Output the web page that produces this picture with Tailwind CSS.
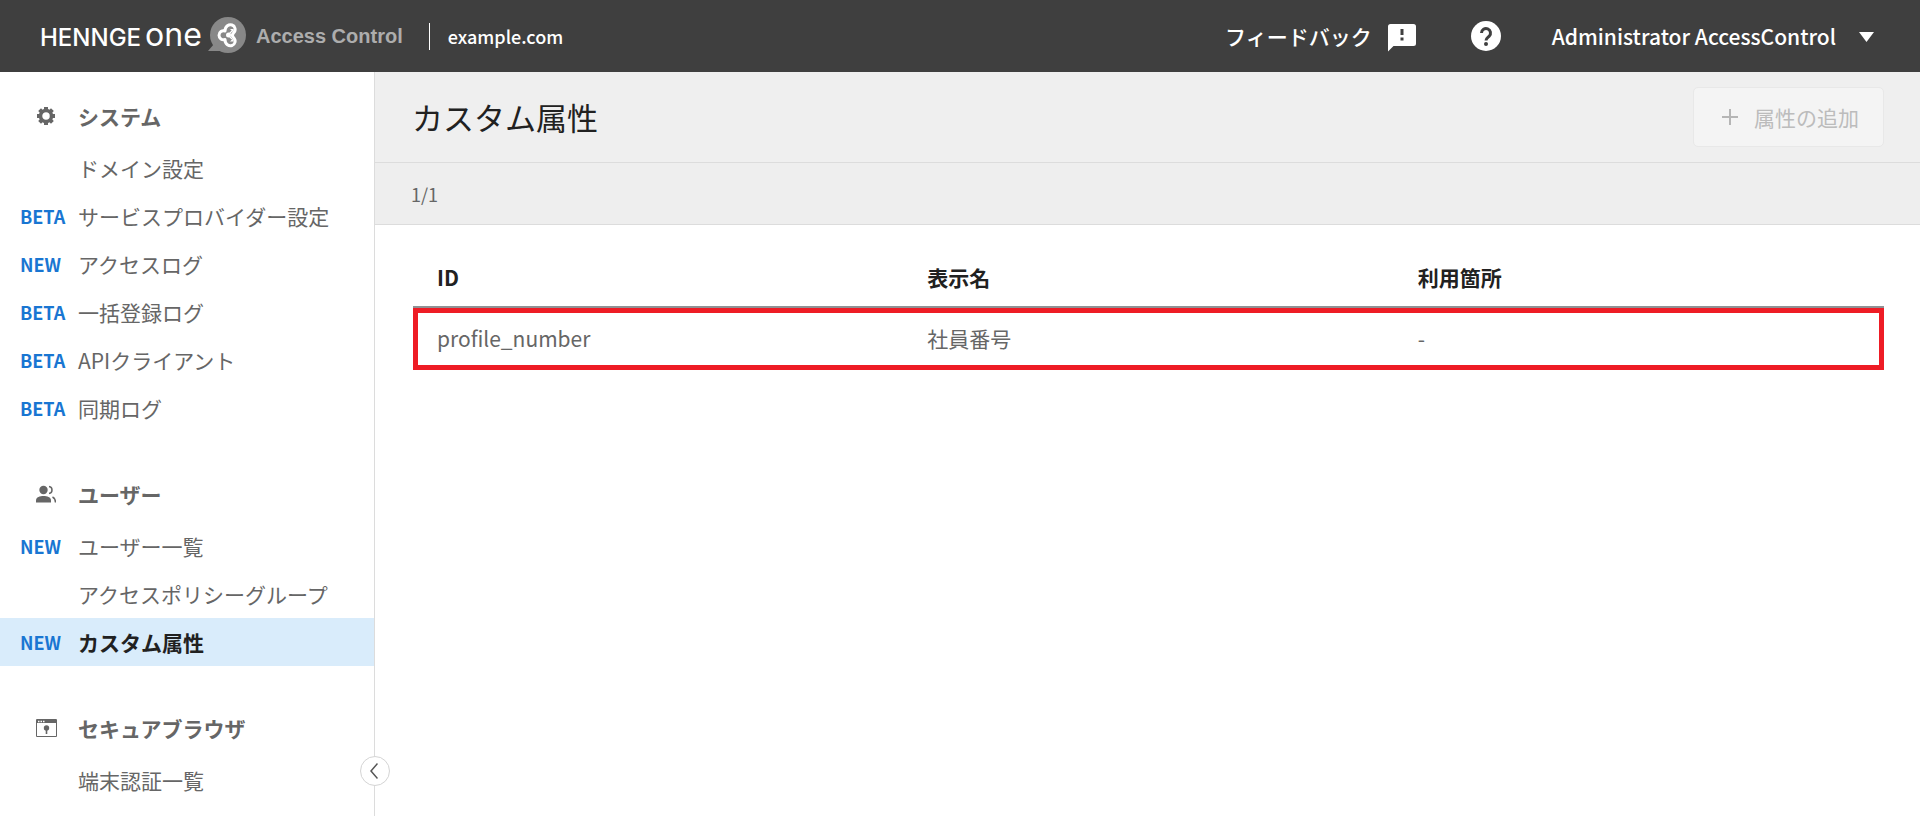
<!DOCTYPE html>
<html lang="ja">
<head>
  <meta charset="UTF-8" />
  <meta name="viewport" content="width=device-width, initial-scale=1.0" />
  <title>カスタム属性 - HENNGE One Access Control</title>
  <script src="https://cdn.jsdelivr.net/npm/@tailwindcss/browser@4"></script>
</head>
<body class="h-screen flex flex-col overflow-hidden bg-white text-[#666666] text-[21px] leading-[30px] font-['Noto_Sans_CJK_JP',sans-serif]">

  <!-- Header -->
  <header class="h-[72px] shrink-0 flex items-center justify-between bg-[#3f3f3f] text-white pl-10 pr-[46px]">
    <div class="flex items-center">
      <a href="#" class="flex items-center">
        <span class="w-[168px] flex items-baseline gap-1 leading-9 font-['Inter',sans-serif]">
          <span class="text-2xl leading-9 font-medium">HENNGE</span>
          <span class="text-[32px] leading-9">one</span>
        </span>
        <svg class="w-[38px] h-[38px]" viewBox="0 0 38 38" fill="none">
          <circle cx="20" cy="18" r="18" fill="#888" />
          <path d="M0 34l6-7 8 7z" fill="#888" />
          <path d="M17 14a4.500 4.500 0 1 0 0 8.500c0 5 4 7 7 6s4.500-5 1.500-8c-1.500-1.500-1.500-3 0-4.500 3-3 1.500-7-1.500-8s-7 1-7 6z" stroke="#fff" stroke-width="3" stroke-linejoin="round" />
          <path d="M20 18l4-4M20 18l4 4" stroke="#fff" stroke-width="1.200" />
          <path d="M22 12h3.500v3.500zM22 24.500h3.500V21z" fill="#fff" />
          <circle cx="20.500" cy="18" r="2.500" fill="#fff" />
        </svg>
        <span class="ml-2.5 text-xl font-bold text-[#adadad] font-['Liberation_Sans',sans-serif]">Access Control</span>
      </a>
      <span class="ml-[26px] pl-[18px] border-l border-white text-lg leading-[27px] font-medium">example.com</span>
    </div>
    <div class="flex items-center font-medium">
      <a href="#" class="flex items-center gap-4">
        フィードバック
        <svg class="w-7 h-7 mt-1" viewBox="0 0 28 28">
          <path fill="#fff" fill-rule="evenodd" d="M2.500 0h23A2.500 2.500 0 0 1 28 2.500v17a2.500 2.500 0 0 1-2.500 2.500H5.500L0 27.500V2.500A2.500 2.500 0 0 1 2.500 0zM12.500 5v6h3V5zM12.500 13.500v3h3v-3z" />
        </svg>
      </a>
      <button type="button" class="ml-[55px]" aria-label="ヘルプ">
        <svg class="w-[30px] h-[30px]" viewBox="0 0 30 30" fill="none">
          <circle cx="15" cy="15" r="15" fill="#fff" />
          <path d="M10.500 12a4.500 4.500 0 1 1 7.700 3.200c-1.700 1.600-3.200 2.300-3.200 4.300" stroke="#3f3f3f" stroke-width="3" />
          <circle cx="15" cy="23" r="2" fill="#3f3f3f" />
        </svg>
      </button>
      <button type="button" class="ml-[51px] flex items-center gap-[23px]">
        Administrator AccessControl
        <svg class="w-[15px] h-[10px] mt-0.5" viewBox="0 0 15 10"><path d="M0 0h15L7.500 10z" fill="#fff" /></svg>
      </button>
    </div>
  </header>

  <div class="flex flex-1 min-h-0">

    <!-- Sidebar -->
    <aside class="relative w-[375px] shrink-0 border-r border-[#dcdcdc]">
      <nav class="h-full overflow-hidden pt-4">
        <section class="mb-[34px]">
          <h2 class="h-14 flex items-center font-bold">
            <svg class="w-[18px] h-[18px] ml-[37px] mr-[23px]" viewBox="0 0 18 18" fill="none" stroke="#666">
              <circle cx="9" cy="9" r="5.500" stroke-width="3.500" />
              <path d="M9 0v3M9 15v3M0 9h3M15 9h3M2.600 2.600l2.200 2.200M13.200 13.200l2.200 2.200M2.600 15.400l2.200-2.200M13.200 4.800l2.200-2.200" stroke-width="4" />
            </svg>
            システム
          </h2>
          <ul>
            <li><a href="#" class="flex items-center h-12 pl-5"><span class="w-[58px]"></span>ドメイン設定</a></li>
            <li><a href="#" class="flex items-center h-12 pl-5"><span class="w-[58px] text-lg font-bold text-[#1976d2]">BETA</span>サービスプロバイダー設定</a></li>
            <li><a href="#" class="flex items-center h-12 pl-5"><span class="w-[58px] text-lg font-bold text-[#1976d2]">NEW</span>アクセスログ</a></li>
            <li><a href="#" class="flex items-center h-12 pl-5"><span class="w-[58px] text-lg font-bold text-[#1976d2]">BETA</span>一括登録ログ</a></li>
            <li><a href="#" class="flex items-center h-12 pl-5"><span class="w-[58px] text-lg font-bold text-[#1976d2]">BETA</span>APIクライアント</a></li>
            <li><a href="#" class="flex items-center h-12 pl-5"><span class="w-[58px] text-lg font-bold text-[#1976d2]">BETA</span>同期ログ</a></li>
          </ul>
        </section>

        <section class="mb-[34px]">
          <h2 class="h-14 flex items-center font-bold">
            <svg class="w-5 h-[18px] ml-9 mr-[22px]" viewBox="0 0 20 18" fill="none">
              <circle cx="7.500" cy="5" r="4.200" fill="#666" />
              <path d="M0 17.500v-2C0 12 4 11 7.500 11s7.500 1 7.500 4.500v2z" fill="#666" />
              <path d="M13 1.500c4 .500 4 6.500 0 7M16.500 12c2 1 3 2.500 3 5.500" stroke="#666" stroke-width="1.500" />
            </svg>
            ユーザー
          </h2>
          <ul>
            <li><a href="#" class="flex items-center h-12 pl-5"><span class="w-[58px] text-lg font-bold text-[#1976d2]">NEW</span>ユーザー一覧</a></li>
            <li><a href="#" class="flex items-center h-12 pl-5"><span class="w-[58px]"></span>アクセスポリシーグループ</a></li>
            <li><a href="#" class="flex items-center h-12 pl-5 bg-[#d9ecfb] font-bold text-[#212121]" aria-current="page"><span class="w-[58px] text-lg font-bold text-[#1976d2]">NEW</span>カスタム属性</a></li>
          </ul>
        </section>

        <section>
          <h2 class="h-14 flex items-center font-bold">
            <svg class="w-[21px] h-[18px] ml-9 mr-[21px]" viewBox="0 0 21 18" fill="none">
              <path d="M.500.500h20v17H.500z" stroke="#666" />
              <path d="M1 1h19v3H1z" fill="#666" />
              <path d="M2 2.500h7" stroke="#fff" stroke-width="1.500" stroke-dasharray="1.500 1" />
              <circle cx="10.500" cy="9" r="2.700" fill="#666" />
              <path d="M10.500 9v6" stroke="#666" stroke-width="1.600" />
            </svg>
            セキュアブラウザ
          </h2>
          <ul>
            <li><a href="#" class="flex items-center h-12 pl-5"><span class="w-[58px]"></span>端末認証一覧</a></li>
          </ul>
        </section>
      </nav>

      <!-- Collapse toggle, sits on the sidebar border -->
      <button type="button" aria-label="メニューを閉じる" class="absolute bottom-[30px] -right-4 w-[30px] h-[30px] pr-0.5 flex items-center justify-center rounded-full border border-[#d4d4d4] bg-white">
        <svg class="w-2 h-4" viewBox="0 0 8 16" fill="none"><path d="M7.500.500L1 8l6.500 7.500" stroke="#555" stroke-width="1.500" /></svg>
      </button>
    </aside>

    <!-- Content -->
    <main class="flex-1 min-w-0">
      <div class="h-[91px] flex items-center justify-between pl-[37px] pr-9 bg-[#efefef] border-b border-[#dcdcdc]">
        <h1 class="text-[31px] leading-10 text-[#212121]">カスタム属性</h1>
        <button type="button" disabled class="flex items-center gap-4 h-[60px] pl-7 pr-6 border border-[#e8e8e8] rounded-[5px] bg-[#f4f4f4] text-[#bcbcbc]">
          <svg class="w-4 h-4" viewBox="0 0 16 16"><path d="M8 0v16M0 8h16" stroke="#b5b5b5" stroke-width="2" /></svg>
          属性の追加
        </button>
      </div>
      <div class="h-[62px] flex items-center pl-9 bg-[#eeeeee] border-b border-[#dcdcdc] text-lg">1/1</div>

      <div class="pt-[23px] pl-[38px] pr-9">
        <table class="w-full table-fixed border-separate border-spacing-0 text-left">
          <thead class="text-[#212121]">
            <tr class="h-[60px]">
              <th class="pl-6 border-b-2 border-[#8f9194] font-bold">ID</th>
              <th class="pl-6 border-b-2 border-[#8f9194] font-bold">表示名</th>
              <th class="pl-6 border-b-2 border-[#8f9194] font-bold">利用箇所</th>
            </tr>
          </thead>
          <tbody>
            <tr class="h-[62px] outline-[5px] outline-solid -outline-offset-5 outline-[#ee1c25]">
              <td class="pl-6 pb-0.5">profile_number</td>
              <td class="pl-6 pb-0.5">社員番号</td>
              <td class="pl-6 pb-0.5">-</td>
            </tr>
          </tbody>
        </table>
      </div>
    </main>
  </div>
</body>
</html>
